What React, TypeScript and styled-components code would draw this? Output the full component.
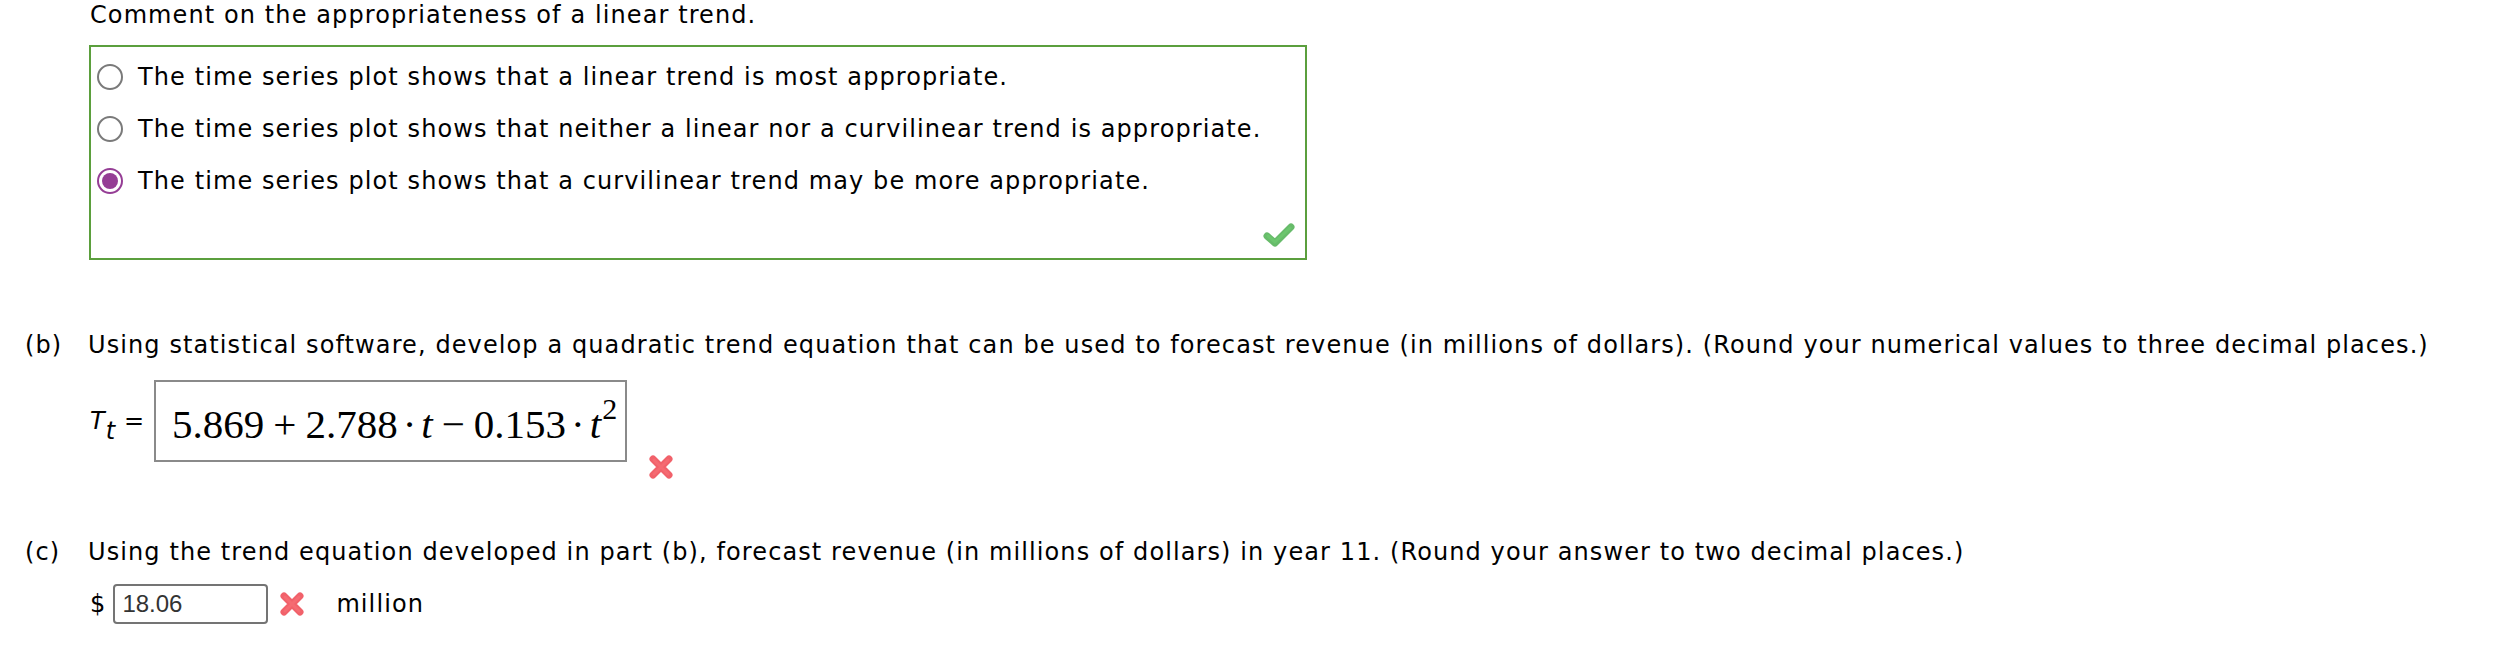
import React from "react"
import styled, { createGlobalStyle } from "styled-components"

const GlobalStyle = createGlobalStyle`
    html, body {
        margin: 0;
        padding: 0;
        background: #ffffff;
    }
    body {
        width: 2502px;
        height: 660px;
        overflow: hidden;
        font-family: "DejaVu Sans", Verdana, sans-serif;
        color: #000000;
    }
`

const Page = styled.div`
    display: flex;
    flex-direction: column;
    font-size: 24px;
    line-height: 30px;
    letter-spacing: 1.1px;
`

const Prompt = styled.div`
    margin: 0 0 0 90px;
    height: 30px;
    line-height: 30px;
`

const ChoiceBox = styled.div`
    display: flex;
    flex-direction: column;
    box-sizing: border-box;
    margin: 15px 0 0 89px;
    width: 1218px;
    height: 215px;
    border: 2px solid #5b9f3d;
    padding: 4px 10px 10px 6px;
`

const ChoiceRow = styled.label`
    display: flex;
    align-items: center;
    height: 52px;
`

const Radio = styled.span<{ $checked?: boolean }>`
    box-sizing: border-box;
    width: 26px;
    height: 26px;
    border-radius: 50%;
    border: 2px solid ${(p) => (p.$checked ? "#953d95" : "#7a7a7a")};
    margin-right: 15px;
    padding: 3px;
    display: flex;
    & > span {
        flex: 1;
        border-radius: 50%;
        background: ${(p) => (p.$checked ? "#953d95" : "transparent")};
    }
`

const BoxFooter = styled.div`
    margin-top: auto;
    display: flex;
    justify-content: flex-end;
`

const Part = styled.div<{ $top: number }>`
    display: flex;
    margin: ${(p) => p.$top}px 0 0 25px;
    height: 30px;
    line-height: 30px;
    white-space: nowrap;
`

const PartLabel = styled.span`
    width: 63px;
    flex: none;
`

const EquationRow = styled.div`
    display: flex;
    align-items: flex-start;
    margin: 20px 0 0 90px;
`

const Lhs = styled.span`
    display: flex;
    align-items: baseline;
    margin-top: 26px;
    width: 64px;
    letter-spacing: 0;
    i {
        font-style: italic;
    }
    sub {
        font-style: italic;
        font-size: 24px;
        position: relative;
        top: 10px;
        vertical-align: baseline;
        margin: 0 9px 0 1px;
    }
`

const EquationBox = styled.div`
    box-sizing: border-box;
    height: 82px;
    width: 473px;
    border: 2px solid #8a8a8a;
    padding: 6px 0 0 16px;
    display: flex;
    align-items: center;
    font-family: "Liberation Serif", "Times New Roman", serif;
    font-size: 41px;
    letter-spacing: 0;
    white-space: nowrap;
`

const Op = styled.span<{ $gap: number }>`
    margin: 0 ${(p) => p.$gap}px;
`

const Var = styled.i`
    font-style: italic;
`

const Sup = styled.span`
    display: inline-block;
    font-size: 30px;
    transform: translateY(-15px);
    margin-left: 1px;
`

const Mark = styled.span<{ $top?: number; $left?: number }>`
    display: flex;
    margin: ${(p) => p.$top ?? 0}px 0 0 ${(p) => p.$left ?? 0}px;
`

const AnswerRow = styled.div`
    display: flex;
    align-items: center;
    margin: 17px 0 0 90px;
    height: 40px;
`

const AnswerInput = styled.div`
    box-sizing: border-box;
    width: 155px;
    height: 40px;
    margin-left: 7px;
    border: 2px solid #747474;
    border-radius: 4px;
    padding: 0 0 0 7px;
    display: flex;
    align-items: center;
    color: #333333;
    font-family: "Liberation Sans", Arial, sans-serif;
    font-size: 24px;
    letter-spacing: 0;
`

const Unit = styled.span`
    margin-left: 30px;
`

const CheckIcon = () => (
    <svg width="32" height="26" viewBox="0 0 32 26">
        <path d="M4 14 L12 21 L28 5" fill="none" stroke="#4caf50" strokeWidth="7" strokeLinecap="round" strokeLinejoin="round" opacity="0.85" />
        <path d="M5 14 L12 20 L27 6" fill="none" stroke="#6cc66e" strokeWidth="3" strokeLinecap="round" strokeLinejoin="round" />
    </svg>
)

const CrossIcon = ({ size = 28 }: { size?: number }) => (
    <svg width={size} height={size} viewBox="0 0 28 28">
        <path d="M6 6 L22 22 M22 6 L6 22" fill="none" stroke="#f0505a" strokeWidth="7" strokeLinecap="round" opacity="0.9" />
        <path d="M7 7 L21 21 M21 7 L7 21" fill="none" stroke="#f56b72" strokeWidth="3" strokeLinecap="round" />
    </svg>
)

const choices = [
    { text: "The time series plot shows that a linear trend is most appropriate.", checked: false },
    { text: "The time series plot shows that neither a linear nor a curvilinear trend is appropriate.", checked: false },
    { text: "The time series plot shows that a curvilinear trend may be more appropriate.", checked: true },
]

export default function App() {
    return (
        <>
            <GlobalStyle />
            <Page>
                <Prompt>Comment on the appropriateness of a linear trend.</Prompt>
                <ChoiceBox>
                    {choices.map((c) => (
                        <ChoiceRow key={c.text}>
                            <Radio $checked={c.checked}>
                                <span />
                            </Radio>
                            {c.text}
                        </ChoiceRow>
                    ))}
                    <BoxFooter>
                        <CheckIcon />
                    </BoxFooter>
                </ChoiceBox>

                <Part $top={70}>
                    <PartLabel>(b)</PartLabel>
                    <span>
                        Using statistical software, develop a quadratic trend equation that can be used to forecast revenue (in millions of dollars). (Round your numerical values to three decimal places.)
                    </span>
                </Part>
                <EquationRow>
                    <Lhs>
                        <i>T</i>
                        <sub>t</sub>=
                    </Lhs>
                    <EquationBox>
                        5.869<Op $gap={9}>+</Op>2.788<Op $gap={5}>·</Op>
                        <Var>t</Var>
                        <Op $gap={9}>−</Op>0.153<Op $gap={5}>·</Op>
                        <Var>t</Var>
                        <Sup>2</Sup>
                    </EquationBox>
                    <Mark $top={73} $left={20}>
                        <CrossIcon />
                    </Mark>
                </EquationRow>

                <Part $top={56}>
                    <PartLabel>(c)</PartLabel>
                    <span>
                        Using the trend equation developed in part (b), forecast revenue (in millions of dollars) in year 11. (Round your answer to two decimal places.)
                    </span>
                </Part>
                <AnswerRow>
                    <span>$</span>
                    <AnswerInput>18.06</AnswerInput>
                    <Mark $left={10}>
                        <CrossIcon />
                    </Mark>
                    <Unit>million</Unit>
                </AnswerRow>
            </Page>
        </>
    )
}
